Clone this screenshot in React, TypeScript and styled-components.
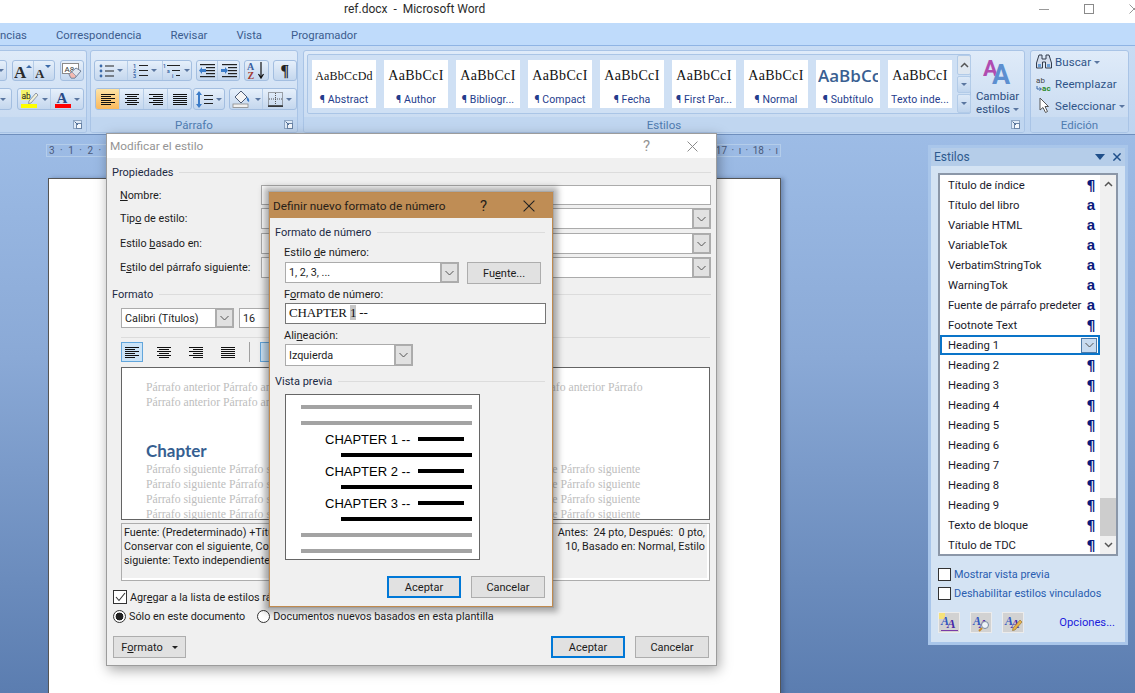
import React from 'react';
import styled, { createGlobalStyle } from 'styled-components';

const UI = `Roboto, "Open Sans", "Liberation Sans", sans-serif`;
const SERIF = `"Liberation Serif", "DejaVu Serif", serif`;

const GlobalStyle = createGlobalStyle`
  html, body { margin: 0; height: 100%; overflow: hidden; background: #fff; }
  body { font-family: ${UI}; font-size: 10.8px; color: #1c1c1c; }
  #root { height: 100%; }
  * { box-sizing: border-box; }
  u { text-underline-offset: 1px; }
`;

const Win = styled.div`
  position: relative;
  width: 1135px;
  height: 693px;
  overflow: hidden;
  display: flex;
  flex-direction: column;
`;

/* ---- title bar and tabs ---- */
const TitleBar = styled.div`
  height: 23px;
  flex: none;
  display: flex;
  align-items: center;
  padding: 0 0 5px 344px;
  background: #fff;
  font-size: 12px;
  color: #2b2b2b;
  white-space: pre;
`;
const WinControls = styled.div`
  margin-left: auto;
  margin-right: -4px;
  display: flex;
  align-items: center;
  gap: 35px;
`;
const MinBtn = styled.span`
  width: 10px;
  height: 1px;
  background: #9a9a9a;
`;
const MaxBtn = styled.span`
  width: 10px;
  height: 10px;
  border: 1px solid #8a8a8a;
`;
const TabBar = styled.div`
  height: 23px;
  flex: none;
  display: flex;
  align-items: center;
  gap: 29px;
  padding-top: 3px;
  background: #bfdbfb;
  border-bottom: 1px solid #8fb4e4;
  overflow: hidden;
`;
const Tab = styled.span<{ $cut?: boolean }>`
  font-size: 11.3px;
  color: #3b5b8e;
  ${(p) => p.$cut && 'margin-left: -6px;'}
`;

/* ---- ribbon ---- */
const Ribbon = styled.div`
  height: 89px;
  flex: none;
  display: flex;
  gap: 3px;
  padding: 4px 0 1px 0;
  background: linear-gradient(#c8dcf4, #bdd4f0);
  border-bottom: 1px solid #6f8fbd;
`;
const Group = styled.section<{ $w: number; $cut?: boolean; $ml?: number }>`
  width: ${(p) => p.$w}px;
  flex: none;
  margin-left: ${(p) => p.$ml ?? 0}px;
  display: flex;
  flex-direction: column;
  border: 1px solid #a9c4e6;
  border-radius: 3px;
  overflow: hidden;
  background: linear-gradient(#dfebf9, #c6d9f0);
  ${(p) => p.$cut && 'border-left: none; border-top-left-radius: 0; border-bottom-left-radius: 0;'}
`;
const GroupBody = styled.div`
  flex: 1;
  min-height: 0;
`;
const GroupLabel = styled.div`
  height: 15px;
  flex: none;
  position: relative;
  text-align: center;
  font-size: 11.5px;
  line-height: 17px;
  color: #4f7cb0;
  background: #c0d6f0;
`;
const Launcher = styled.svg`
  position: absolute;
  right: 4px;
  top: 3px;
`;
const ToolRows = styled.div`
  display: flex;
  flex-direction: column;
  gap: 7px;
  padding-top: 9px;
`;
const ToolRow = styled.div<{ $pl?: number; $gap?: number; $h?: number }>`
  display: flex;
  gap: ${(p) => p.$gap ?? 4}px;
  padding-left: ${(p) => p.$pl ?? 0}px;
  height: ${(p) => p.$h ?? 21}px;
  align-items: stretch;
`;
const ToolSet = styled.div<{ $ml?: number }>`
  display: flex;
  margin-left: ${(p) => p.$ml ?? 0}px;
  border: 1px solid #a3bee0;
  border-radius: 3px;
  background: linear-gradient(#e6f0fb 0%, #d5e3f4 50%, #c4d7ee 100%);
  overflow: hidden;
`;
const ToolBtn = styled.div<{ $w: number; $on?: boolean }>`
  width: ${(p) => p.$w}px;
  display: flex;
  align-items: center;
  justify-content: center;
  gap: 3px;
  border-right: 1px solid #b6cde8;
  &:last-child { border-right: none; }
  ${(p) => p.$on && 'background: linear-gradient(#fde3a5, #fbb95c);'}
`;
const Caret = styled.i<{ $dark?: boolean }>`
  width: 0;
  height: 0;
  border-left: 3px solid transparent;
  border-right: 3px solid transparent;
  border-top: 3px solid ${(p) => (p.$dark ? '#222' : '#5a76a0')};
`;
const Pilcrow = styled.strong`
  font-family: ${SERIF};
  font-size: 16px;
  color: #222;
`;

const GalleryWrap = styled.div`
  display: flex;
  height: 100%;
  padding: 3px 0 0 3px;
`;
const Gallery = styled.div`
  width: 664px;
  height: 60px;
  display: flex;
  border: 1px solid #aac5e6;
  border-radius: 2px;
  background: #cfe0f4;
`;
const Tiles = styled.div`
  flex: 1;
  display: flex;
  gap: 8px;
  padding: 5px 0 0 4px;
`;
const Tile = styled.div`
  width: 64px;
  height: 48px;
  flex: none;
  background: #fff;
  display: flex;
  flex-direction: column;
  align-items: center;
  overflow: hidden;
`;
const TileSample = styled.div<{ $kind?: string }>`
  height: 33px;
  width: 60px;
  overflow: hidden;
  white-space: nowrap;
  text-align: center;
  line-height: 32px;
  color: #111;
  font-family: ${SERIF};
  font-size: 14px;
  letter-spacing: 0.35px;
  ${(p) => p.$kind === 'small' && 'font-size: 12px; letter-spacing: 0.2px;'}
  ${(p) =>
    p.$kind === 'head' &&
    `font-family: "Open Sans", sans-serif; font-size: 17px; font-weight: 600; color: #3a5f92; text-align: left; letter-spacing: 0;`}
`;
const TileName = styled.div`
  font-size: 10.5px;
  line-height: 14px;
  letter-spacing: 0.1px;
  color: #243c8c;
  white-space: nowrap;
`;
const GalleryScroll = styled.div`
  width: 14px;
  display: flex;
  flex-direction: column;
  gap: 1px;
  margin-right: -1px;
`;
const ScrollCell = styled.div<{ $h: number; $dim?: boolean }>`
  height: ${(p) => p.$h}px;
  display: flex;
  align-items: center;
  justify-content: center;
  border: 1px solid #b2cbe8;
  border-radius: 2px;
  background: ${(p) => (p.$dim ? '#dfe7f0' : 'linear-gradient(#dde9f7, #c0d5ee)')};
`;
const ChangeStyles = styled.div`
  width: 51px;
  display: flex;
  flex-direction: column;
  align-items: center;
  margin-left: 1px;
  padding-top: 2px;
  font-size: 11.5px;
  line-height: 13px;
  color: #2b4d80;
  text-align: center;
`;
const ChangeCaption = styled.div`
  margin-top: 5px;
`;
const InlineCaret = styled(Caret)`
  display: inline-block;
  margin-left: 3px;
  vertical-align: 2px;
`;
const EditList = styled.div`
  display: flex;
  flex-direction: column;
  padding: 0 0 0 5px;
  gap: 1px;
`;
const EditItem = styled.div`
  height: 21px;
  display: flex;
  align-items: center;
  gap: 3px;
  font-size: 11.5px;
  letter-spacing: 0.1px;
  color: #2f5488;
`;

/* ---- document area ---- */
const Workspace = styled.div`
  flex: 1;
  min-height: 0;
  background: linear-gradient(#9dbce6 0%, #8aa9d6 40%, #5b7db0 100%);
  padding: 9px 0 0 46px;
`;
const Ruler = styled.div`
  width: 735px;
  height: 13px;
  display: flex;
  justify-content: space-between;
  align-items: center;
  padding: 0 2px;
  border: 1px solid #b4cdea;
  font-size: 10px;
  color: #4b5a7a;
  white-space: nowrap;
`;
const RulerMarks = styled.span<{ $spread: number }>`
  word-spacing: ${(p) => p.$spread}px;
`;
const Page = styled.div`
  width: 733px;
  height: 540px;
  margin: 21px 0 0 2px;
  background: #fff;
  border: 1px solid #555;
  box-shadow: 3px 0 4px rgba(40, 60, 100, 0.35);
`;

/* ---- dialogs ---- */
const BackDialog = styled.div`
  position: absolute;
  left: 106px;
  top: 133px;
  width: 611px;
  height: 533px;
  background: #f0f0f0;
  border: 1px solid #9c9c9c;
  box-shadow: 2px 4px 12px rgba(0, 0, 0, 0.35);
  display: flex;
  flex-direction: column;
`;
const FrontDialog = styled.div`
  position: absolute;
  left: 269px;
  top: 192px;
  width: 284px;
  height: 415px;
  background: #f0f0f0;
  border: 1px solid #c08a4e;
  box-shadow: 0 0 0 1px rgba(120, 120, 120, 0.25), 0 0 6px 5px rgba(0, 0, 0, 0.3);
  display: flex;
  flex-direction: column;
`;
const DlgTitle = styled.div<{ $active?: boolean }>`
  height: ${(p) => (p.$active ? 25 : 24)}px;
  flex: none;
  display: flex;
  align-items: center;
  padding-left: 3px;
  font-size: 11.8px;
  background: ${(p) => (p.$active ? '#bf8d55' : '#fff')};
  color: ${(p) => (p.$active ? '#262018' : '#949494')};
`;
const DlgHelp = styled.span<{ $right: number }>`
  margin-left: auto;
  margin-right: ${(p) => p.$right}px;
  font-size: 15px;
`;
const DlgClose = styled.span<{ $right: number }>`
  display: flex;
  margin-right: ${(p) => p.$right}px;
`;
const BackBody = styled.div`
  flex: 1;
  min-height: 0;
  padding: 7px 5px 0 5px;
  display: flex;
  flex-direction: column;
`;
const FrontBody = styled.div`
  flex: 1;
  min-height: 0;
  padding: 7px 7px 0 5px;
  display: flex;
  flex-direction: column;
`;
const Section = styled.div<{ $mt?: number }>`
  height: 14px;
  flex: none;
  margin-top: ${(p) => p.$mt ?? 0}px;
  padding-top: 2px;
  display: flex;
  align-items: center;
  gap: 6px;
  line-height: 12px;
  font-size: 11px;
  color: #1c2a44;
  &::after {
    content: '';
    flex: 1;
    height: 1px;
    margin-top: -2px;
    background: #dcdcdc;
  }
`;
const FieldRow = styled.div<{ $mt: number; $h: number }>`
  height: ${(p) => p.$h}px;
  margin-top: ${(p) => p.$mt}px;
  padding-left: 8px;
  display: flex;
  align-items: center;
  flex: none;
`;
const FieldLabel = styled.span`
  width: 141px;
  flex: none;
  white-space: nowrap;
`;
const Field = styled.div<{ $w?: number; $h?: number; $serif?: boolean }>`
  ${(p) => (p.$w ? `width: ${p.$w}px; flex: none;` : 'flex: 1;')}
  height: ${(p) => (p.$h ? `${p.$h}px` : '100%')};
  display: flex;
  align-items: center;
  padding-left: 3px;
  background: #fff;
  border: 1px solid #ababab;
  white-space: pre;
  ${(p) =>
    p.$serif &&
    `font-family: ${SERIF}; font-size: 13px; letter-spacing: -.2px; color: #111; border-color: #767676; padding-bottom: 2px;`}
`;
const Arrow = styled.span`
  margin-left: auto;
  width: 18px;
  height: 100%;
  flex: none;
  display: flex;
  align-items: center;
  justify-content: center;
  background: #e1e1e1;
  border-left: 2px solid #adadad;
  border-right: 1px solid #adadad;
  border-top: 1px solid #adadad;
  border-bottom: 1px solid #adadad;
`;
const Chevron = () => (
  <svg width="9" height="6" viewBox="0 0 9 6">
    <path d="M0.5 1 L4.5 5 L8.5 1" fill="none" stroke="#555" strokeWidth="1" />
  </svg>
);
const SmallLabel = styled.div<{ $mt?: number }>`
  height: 14px;
  line-height: 16px;
  flex: none;
  margin-top: ${(p) => p.$mt ?? 0}px;
  padding-left: 9px;
  font-size: 11px;
`;
const Picked = styled.span`
  background: #c6c6c6;
`;
const FrontFieldRow = styled.div<{ $mt: number; $h: number }>`
  height: ${(p) => p.$h}px;
  margin-top: ${(p) => p.$mt}px;
  flex: none;
  padding-left: 10px;
  display: flex;
  align-items: flex-start;
  gap: 8px;
`;
const Btn = styled.div<{ $w: number; $default?: boolean }>`
  width: ${(p) => p.$w}px;
  height: 22px;
  flex: none;
  display: flex;
  align-items: center;
  justify-content: center;
  gap: 9px;
  font-size: 11px;
  background: #e1e1e1;
  border: ${(p) => (p.$default ? '2px solid #0078d7' : '1px solid #adadad')};
`;
const FormatRow = styled.div`
  height: 20px;
  margin-top: 7px;
  padding-left: 9px;
  display: flex;
  gap: 5px;
  flex: none;
`;
const Divider = styled.div`
  height: 1px;
  margin: 9px 1px 0 9px;
  background: #dcdcdc;
  flex: none;
`;
const AlignRow = styled.div`
  height: 20px;
  margin-top: 4px;
  padding-left: 9px;
  display: flex;
  gap: 10px;
  flex: none;
`;
const AlignBtn = styled.div<{ $on?: boolean }>`
  width: 22px;
  height: 20px;
  display: flex;
  align-items: center;
  justify-content: center;
  ${(p) => p.$on && 'background: #cce4f7; border: 1px solid #62a6dc;'}
`;
const AlignSep = styled.div`
  width: 1px;
  background: #a0a0a0;
`;
const PreviewPane = styled.div`
  height: 153px;
  margin: 5px 1px 0 9px;
  flex: none;
  overflow: hidden;
  background: #fff;
  border: 1px solid #646464;
  padding: 12px 0 0 24px;
  font-family: ${SERIF};
  font-size: 11.75px;
  line-height: 15px;
  color: #bdbdbd;
  white-space: nowrap;
`;
const PreviewHeading = styled.div`
  font-family: Lato, "Open Sans", sans-serif;
  font-size: 17px;
  font-weight: 700;
  line-height: 22px;
  color: #365f91;
  margin: 30px 0 0;
`;
const Desc = styled.div`
  height: 58px;
  margin: 3px 1px 0 9px;
  flex: none;
  background: #f0f0f0;
  border: 1px solid #adadad;
  box-shadow: inset 0 -2px 0 #fff, inset -2px 0 0 #fff;
  padding: 2px 4px 0 2px;
  line-height: 14px;
  overflow: hidden;
`;
const DescLine = styled.div`
  display: flex;
  justify-content: space-between;
  white-space: pre;
`;
const CheckRow = styled.div<{ $mt: number }>`
  height: 14px;
  margin-top: ${(p) => p.$mt}px;
  padding-left: 1px;
  display: flex;
  align-items: center;
  gap: 3px;
  flex: none;
  white-space: nowrap;
`;
const CheckBox = styled.span<{ $size?: number }>`
  width: ${(p) => p.$size ?? 14}px;
  height: ${(p) => p.$size ?? 14}px;
  flex: none;
  display: flex;
  align-items: center;
  justify-content: center;
  background: #fff;
  border: 1px solid #333;
`;
const Radio = styled.span<{ $on?: boolean; $ml?: number }>`
  width: 13px;
  height: 13px;
  flex: none;
  margin-left: ${(p) => p.$ml ?? 0}px;
  border-radius: 50%;
  border: 1px solid #333;
  background: ${(p) => (p.$on ? 'radial-gradient(circle, #222 0 3.6px, #fff 4.2px)' : '#fff')};
`;
const BottomBar = styled.div`
  margin-top: 13px;
  padding: 0 2px 0 1px;
  display: flex;
  gap: 10px;
  flex: none;
`;
const BottomSpacer = styled.div`
  flex: 1;
`;
const Sample = styled.div`
  width: 195px;
  height: 166px;
  margin: 6px 0 0 10px;
  flex: none;
  background: #fff;
  border: 1px solid #666;
  padding: 4px 7px 0 15px;
`;
const SampleRow = styled.div<{ $indent?: number }>`
  height: 16px;
  display: flex;
  align-items: center;
  padding-left: ${(p) => p.$indent ?? 0}px;
`;
const SampleBar = styled.div<{ $black?: boolean; $w?: number }>`
  height: 4px;
  ${(p) => (p.$w ? `width: ${p.$w}px; margin-left: 8px;` : 'flex: 1;')}
  background: ${(p) => (p.$black ? '#000' : '#a3a3a3')};
`;
const SampleText = styled.span`
  font-family: "Liberation Sans", Arial, sans-serif;
  font-size: 13px;
  color: #000;
  white-space: nowrap;
`;
const FrontFooter = styled.div`
  margin-top: 16px;
  display: flex;
  justify-content: flex-end;
  gap: 10px;
  flex: none;
`;

/* ---- styles task pane ---- */
const Pane = styled.aside`
  position: absolute;
  left: 928px;
  top: 145px;
  width: 200px;
  height: 500px;
  border: 3px solid #a9c6ea;
  background: #d4e3f3;
  display: flex;
  flex-direction: column;
`;
const PaneHead = styled.div`
  height: 18px;
  flex: none;
  display: flex;
  align-items: center;
  padding: 0 4px 0 3px;
  background: #b5cde9;
  color: #2e5a8e;
  font-size: 12px;
`;
const PaneHeadIcons = styled.span`
  margin-left: auto;
  display: flex;
  align-items: center;
  gap: 8px;
`;
const List = styled.div`
  width: 180px;
  height: 383px;
  margin: 7px 0 0 7px;
  flex: none;
  display: flex;
  border: 2px solid #8b97a8;
  background: #fff;
`;
const Rows = styled.div`
  flex: 1;
  min-width: 0;
`;
const StyleRow = styled.div<{ $on?: boolean }>`
  height: 20px;
  display: flex;
  align-items: center;
  padding: 0 3px 0 8px;
  font-size: 11.3px;
  color: #1a1a2a;
  white-space: nowrap;
  ${(p) => p.$on && 'border: 2px solid #0a74c8; padding: 0 1px 0 6px;'}
`;
const Mark = styled.span<{ $para?: boolean }>`
  margin-left: auto;
  width: 12px;
  text-align: center;
  font-family: ${(p) => (p.$para ? '"DejaVu Sans"' : '"Liberation Sans"')}, sans-serif;
  font-weight: 700;
  font-size: ${(p) => (p.$para ? 14 : 15)}px;
  line-height: 16px;
  color: #0a1a7c;
`;
const RowDrop = styled.span`
  margin-left: auto;
  width: 16px;
  height: 15px;
  display: flex;
  align-items: center;
  justify-content: center;
  background: #c8dbf0;
  border: 1px solid #4f7ba8;
`;
const Scroll = styled.div`
  width: 16px;
  flex: none;
  display: flex;
  flex-direction: column;
  background: #f0f0f0;
`;
const ScrollArrow = styled.div`
  height: 18px;
  flex: none;
  display: flex;
  align-items: center;
  justify-content: center;
`;
const ScrollTrack = styled.div`
  flex: 1;
  display: flex;
  flex-direction: column;
  justify-content: flex-end;
`;
const ScrollThumb = styled.div`
  height: 38px;
  background: #cdcdcd;
`;
const PaneCheck = styled.div<{ $mt: number }>`
  height: 13px;
  margin: ${(p) => p.$mt}px 0 0 7px;
  display: flex;
  align-items: center;
  gap: 3px;
  font-size: 10.9px;
  color: #2a5db0;
  white-space: nowrap;
`;
const PaneFoot = styled.div`
  margin: 12px 0 0 7px;
  display: flex;
  align-items: center;
  gap: 10px;
`;
const PaneBtn = styled.div`
  width: 22px;
  height: 21px;
  display: flex;
  align-items: center;
  justify-content: center;
  background: #d2d2d2;
  border: 1px solid #ececec;
`;
const OptionsLink = styled.span`
  margin-left: auto;
  margin-right: 10px;
  font-size: 11.2px;
  color: #1c1cdc;
`;

/* ---- drawn icons ---- */
const ALIGN: Record<string, number[][]> = {
  left: [[1, 14], [1, 10], [1, 14], [1, 10], [1, 14], [1, 10]],
  center: [[1, 14], [3, 10], [1, 14], [3, 10], [1, 14], [3, 10]],
  right: [[1, 14], [5, 10], [1, 14], [5, 10], [1, 14], [5, 10]],
  justify: [[1, 14], [1, 14], [1, 14], [1, 14], [1, 14], [1, 14]],
};
const AlignIcon = ({ kind }: { kind: string }) => (
  <svg width="16" height="13" viewBox="0 0 16 13">
    {ALIGN[kind].map(([x, w], i) => (
      <rect key={i} x={x} y={i * 2 + 1} width={w} height="1" fill="#111" />
    ))}
  </svg>
);
const Launch = () => (
  <Launcher width="9" height="9" viewBox="0 0 9 9">
    <rect x="0.5" y="0.5" width="8" height="8" fill="#dfeaf6" stroke="#8ea6c4" />
    <rect x="3.5" y="3.5" width="5" height="5" fill="#f4f8fc" stroke="#6a84a6" />
    <path d="M1.5 1.5 L5 5" stroke="#4d6a92" />
  </Launcher>
);
const Grow = ({ up }: { up?: boolean }) => (
  <svg width="18" height="16" viewBox="0 0 18 16">
    <text x="0" y="15" fontFamily={SERIF} fontWeight="700" fontSize={up ? 17 : 13} fill="#2b2b2b">
      A
    </text>
    <path d={up ? 'M12 5 L15 2 L18 5 Z' : 'M10 2 L16 2 L13 5 Z'} fill="#3c6aa8" />
  </svg>
);
const ClearFormat = () => (
  <svg width="22" height="18" viewBox="0 0 22 18">
    <rect x="1.5" y="1.5" width="16" height="10" fill="#fff" stroke="#8a8a8a" />
    <text x="3.5" y="9.5" fontFamily={UI} fontSize="8" fill="#333">
      A8
    </text>
    <path d="M8 12 L15 6 L20 9 L14 16 L10 16 Z" fill="#dfe5ee" stroke="#6f7f98" />
    <path d="M8 12 L11 10 L15 14 L14 16 L10 16 Z" fill="#f4b9b0" stroke="#6f7f98" strokeWidth=".6" />
  </svg>
);
const Highlight = () => (
  <svg width="18" height="18" viewBox="0 0 18 18">
    <rect x="0" y="0" width="9" height="10" fill="#f5f56a" />
    <text x="0.5" y="8.5" fontFamily={UI} fontSize="8.5" fill="#222">
      ab
    </text>
    <path d="M8 11 L15 3 L17 5 L10 13 L7.5 13.5 Z" fill="#f2f2d8" stroke="#7a8296" strokeWidth=".8" />
    <rect x="0" y="14" width="16" height="4" fill="#ffff00" />
  </svg>
);
const FontColor = () => (
  <svg width="16" height="18" viewBox="0 0 16 18">
    <text x="1.5" y="12.5" fontFamily={SERIF} fontWeight="700" fontSize="15" fill="#2a4a86">
      A
    </text>
    <rect x="0" y="14" width="16" height="4" fill="#f00" />
  </svg>
);
const Bullets = () => (
  <svg width="15" height="14" viewBox="0 0 15 14">
    {[2, 7, 12].map((y) => (
      <g key={y}>
        <circle cx="2" cy={y} r="1.4" fill="#3c6aa8" />
        <rect x="6" y={y - 0.5} width="9" height="1" fill="#222" />
      </g>
    ))}
  </svg>
);
const Numbers = () => (
  <svg width="15" height="15" viewBox="0 0 15 15">
    {[0, 1, 2].map((i) => (
      <g key={i}>
        <text x="0" y={i * 5 + 5} fontFamily={UI} fontWeight="700" fontSize="5.5" fill="#3c6aa8">
          {i + 1}
        </text>
        <rect x="6" y={i * 5 + 2} width="9" height="1" fill="#222" />
      </g>
    ))}
  </svg>
);
const Multi = () => (
  <svg width="18" height="16" viewBox="0 0 18 16">
    <text x="0" y="5" fontFamily={UI} fontWeight="700" fontSize="5" fill="#3c6aa8">1</text>
    <rect x="4" y="2" width="13" height="1" fill="#222" />
    <text x="4" y="10" fontFamily={UI} fontWeight="700" fontSize="5" fill="#3c6aa8">a</text>
    <rect x="9" y="7" width="8" height="1" fill="#222" />
    <text x="9" y="15" fontFamily={UI} fontWeight="700" fontSize="5" fill="#3c6aa8">i</text>
    <rect x="13" y="12" width="4" height="1" fill="#222" />
  </svg>
);
const Indent = ({ more }: { more?: boolean }) => (
  <svg width="18" height="15" viewBox="0 0 18 15">
    {[1, 4, 7, 10, 13].map((y, i) => (
      <rect key={y} x={i > 0 && i < 4 ? 8 : 2} y={y} width={i > 0 && i < 4 ? 9 : 15} height="1.2" fill="#222" />
    ))}
    <path
      d={more ? 'M1 6 H5 V4 L8 7.5 L5 11 V9 H1 Z' : 'M8 6 H4 V4 L1 7.5 L4 11 V9 H8 Z'}
      fill="#3c7cc8"
    />
  </svg>
);
const Sort = () => (
  <svg width="20" height="19" viewBox="0 0 20 19">
    <text x="1" y="9" fontFamily={SERIF} fontWeight="700" fontSize="10" fill="#3a5fa0">A</text>
    <text x="1.5" y="18" fontFamily={SERIF} fontWeight="700" fontSize="10" fill="#a33a30">Z</text>
    <path d="M15 1 V16 M12.5 13 L15 17 L17.5 13" fill="none" stroke="#111" strokeWidth="1.2" />
  </svg>
);
const Spacing = () => (
  <svg width="17" height="17" viewBox="0 0 17 17">
    <path d="M3 0 L6 4 H4 V13 H6 L3 17 L0 13 H2 V4 H0 Z" fill="#3c7cc8" />
    <rect x="8" y="4" width="9" height="1" fill="#222" />
    <rect x="8" y="8" width="9" height="1" fill="#222" />
    <rect x="8" y="12" width="9" height="1" fill="#222" />
  </svg>
);
const Bucket = () => (
  <svg width="20" height="18" viewBox="0 0 20 18">
    <path d="M3 7 L9 1 L15 7 L9 13 Z" fill="#f4f4f4" stroke="#4c5a74" />
    <path d="M15 7 Q18 9 17 12 Q14 11 15 7 Z" fill="#3c7cc8" />
    <rect x="1" y="14" width="15" height="3.5" fill="#f0f0f0" stroke="#8a8a8a" strokeWidth=".8" />
  </svg>
);
const Borders = () => (
  <svg width="15" height="15" viewBox="0 0 15 15">
    <rect x="0.5" y="0.5" width="14" height="13" fill="none" stroke="#555" strokeDasharray="1 1" />
    <path d="M7.5 1 V13 M1 7 H14" stroke="#555" strokeDasharray="1 1" />
    <rect x="0" y="13.5" width="15" height="1.3" fill="#111" />
  </svg>
);
const ChangeIcon = () => (
  <svg width="30" height="29" viewBox="0 0 30 29">
    <text x="0" y="20" fontFamily={UI} fontWeight="700" fontSize="22" fill="#b04cb0">A</text>
    <text x="9" y="28" fontFamily={UI} fontWeight="700" fontSize="27" fill="#5d8fd0">A</text>
  </svg>
);
const Binoculars = () => (
  <svg width="16" height="15" viewBox="0 0 16 15">
    <path d="M3 1 H6 V5 H10 V1 H13 L15.5 9 V14 H9.5 V8 H6.5 V14 H0.5 V9 Z" fill="#d3dded" stroke="#333c4c" />
    <rect x="2" y="10" width="3" height="3" fill="#6a9fd8" />
    <rect x="11" y="10" width="3" height="3" fill="#6a9fd8" />
  </svg>
);
const Replace = () => (
  <svg width="16" height="16" viewBox="0 0 16 16">
    <text x="0" y="7" fontFamily={UI} fontSize="8" fill="#444">ab</text>
    <text x="6" y="15" fontFamily={UI} fontWeight="700" fontSize="8" fill="#2a8a2a">ac</text>
    <path d="M1 10 V13 H5 M3.5 11.5 L5.5 13 L3.5 14.5" fill="none" stroke="#3c6aa8" />
  </svg>
);
const Pointer = () => (
  <svg width="16" height="17" viewBox="0 0 16 17">
    <path d="M4 1 V13 L7 10.5 L9.5 15.5 L11.5 14.5 L9 9.5 H12.5 Z" fill="#fff" stroke="#555" />
  </svg>
);
const TriUp = () => (
  <svg width="9" height="6" viewBox="0 0 9 6"><path d="M1 5 L4.5 1.5 L8 5" fill="none" stroke="#555" strokeWidth="1.5" /></svg>
);
const TriDown = () => (
  <svg width="9" height="6" viewBox="0 0 9 6"><path d="M1 1 L4.5 4.5 L8 1" fill="none" stroke="#555" strokeWidth="1.5" /></svg>
);
const Close = ({ color, size, weight = 0.9 }: { color: string; size: number; weight?: number }) => (
  <svg width={size} height={size} viewBox="0 0 10 10">
    <path d="M0.5 0.5 L9.5 9.5 M9.5 0.5 L0.5 9.5" stroke={color} strokeWidth={weight} />
  </svg>
);
const Tick = () => (
  <svg width="11" height="10" viewBox="0 0 11 10">
    <path d="M1 5 L4 8.5 L10 1" fill="none" stroke="#333" strokeWidth="1.1" />
  </svg>
);
const PaneIcon = ({ kind }: { kind: 'new' | 'find' | 'edit' }) => (
  <svg width="20" height="19" viewBox="0 0 20 19">
    {kind === 'new' && <rect x="0" y="0" width="6" height="6" fill="#f5e27a" />}
    <text x="2" y="12" fontFamily={SERIF} fontStyle="italic" fontWeight="700" fontSize="12" fill="#2f56c0">A</text>
    <text x="8" y="15" fontFamily={SERIF} fontStyle="italic" fontWeight="700" fontSize="13" fill="#4a2aa8">A</text>
    {kind === 'new' && <rect x="2" y="17" width="17" height="1" fill="#7a3aa8" />}
    {kind === 'find' && <circle cx="14" cy="12" r="3.5" fill="#eef3f8" stroke="#7a8aa0" />}
    {kind === 'find' && <path d="M11 15 L8 18" stroke="#c88a2a" strokeWidth="2" />}
    {kind === 'edit' && <path d="M10 15 L17 7 L19 9 L12 17 L9.5 17.5 Z" fill="#e8b24a" stroke="#8a6a2a" strokeWidth=".6" />}
  </svg>
);

const SAMPLES = [
  ['AaBbCcDd', '¶ Abstract', 'small'],
  ['AaBbCcI', '¶ Author', ''],
  ['AaBbCcI', '¶ Bibliogr...', ''],
  ['AaBbCcI', '¶ Compact', ''],
  ['AaBbCcI', '¶ Fecha', ''],
  ['AaBbCcI', '¶ First Par...', ''],
  ['AaBbCcI', '¶ Normal', ''],
  ['AaBbCcI', '¶ Subtítulo', 'head'],
  ['AaBbCcI', 'Texto inde...', ''],
];

const STYLE_ROWS: [string, string][] = [
  ['Título de índice', '¶'],
  ['Título del libro', 'a'],
  ['Variable HTML', 'a'],
  ['VariableTok', 'a'],
  ['VerbatimStringTok', 'a'],
  ['WarningTok', 'a'],
  ['Fuente de párrafo predeter', 'a'],
  ['Footnote Text', '¶'],
  ['Heading 1', ''],
  ['Heading 2', '¶'],
  ['Heading 3', '¶'],
  ['Heading 4', '¶'],
  ['Heading 5', '¶'],
  ['Heading 6', '¶'],
  ['Heading 7', '¶'],
  ['Heading 8', '¶'],
  ['Heading 9', '¶'],
  ['Texto de bloque', '¶'],
  ['Título de TDC', '¶'],
];

const before = 'Párrafo anterior '.repeat(6) + 'Párrafo';
const after = 'Párrafo siguiente '.repeat(5) + 'Párrafo siguiente';

function Ribbons() {
  return (
    <Ribbon>
      <Group $w={87} $cut>
        <GroupBody>
          <ToolRows>
            <ToolRow $gap={5}>
              <ToolSet $ml={-6}>
                <ToolBtn $w={11}><Caret /></ToolBtn>
              </ToolSet>
              <ToolSet>
                <ToolBtn $w={21}><Grow up /></ToolBtn>
                <ToolBtn $w={20}><Grow /></ToolBtn>
              </ToolSet>
              <ToolSet>
                <ToolBtn $w={22}><ClearFormat /></ToolBtn>
              </ToolSet>
            </ToolRow>
            <ToolRow $gap={5} $h={22}>
              <ToolSet $ml={-6}>
                <ToolBtn $w={16}><Caret /></ToolBtn>
              </ToolSet>
              <ToolSet>
                <ToolBtn $w={33}><Highlight /><Caret /></ToolBtn>
                <ToolBtn $w={32}><FontColor /><Caret /></ToolBtn>
              </ToolSet>
            </ToolRow>
          </ToolRows>
        </GroupBody>
        <GroupLabel><Launch /></GroupLabel>
      </Group>
      <Group $w={208}>
        <GroupBody>
          <ToolRows>
            <ToolRow $pl={3}>
              <ToolSet>
                <ToolBtn $w={34}><Bullets /><Caret /></ToolBtn>
                <ToolBtn $w={35}><Numbers /><Caret /></ToolBtn>
                <ToolBtn $w={29}><Multi /><Caret /></ToolBtn>
              </ToolSet>
              <ToolSet>
                <ToolBtn $w={22}><Indent /></ToolBtn>
                <ToolBtn $w={21}><Indent more /></ToolBtn>
              </ToolSet>
              <ToolSet><ToolBtn $w={23}><Sort /></ToolBtn></ToolSet>
              <ToolSet><ToolBtn $w={23}><Pilcrow>¶</Pilcrow></ToolBtn></ToolSet>
            </ToolRow>
            <ToolRow $pl={4} $gap={1} $h={22}>
              <ToolSet>
                <ToolBtn $w={24} $on><AlignIcon kind="left" /></ToolBtn>
                <ToolBtn $w={24}><AlignIcon kind="center" /></ToolBtn>
                <ToolBtn $w={24}><AlignIcon kind="right" /></ToolBtn>
                <ToolBtn $w={23}><AlignIcon kind="justify" /></ToolBtn>
              </ToolSet>
              <ToolSet>
                <ToolBtn $w={30}><Spacing /><Caret /></ToolBtn>
              </ToolSet>
              <ToolSet $ml={3}>
                <ToolBtn $w={33}><Bucket /><Caret /></ToolBtn>
                <ToolBtn $w={33}><Borders /><Caret /></ToolBtn>
              </ToolSet>
            </ToolRow>
          </ToolRows>
        </GroupBody>
        <GroupLabel>Párrafo<Launch /></GroupLabel>
      </Group>
      <Group $w={722} $ml={2}>
        <GroupBody>
          <GalleryWrap>
            <Gallery>
              <Tiles>
                {SAMPLES.map(([sample, name, kind]) => (
                  <Tile key={name}>
                    <TileSample $kind={kind}>{sample}</TileSample>
                    <TileName>{name}</TileName>
                  </Tile>
                ))}
              </Tiles>
              <GalleryScroll>
                <ScrollCell $h={20} $dim><TriUp /></ScrollCell>
                <ScrollCell $h={18}><Caret /></ScrollCell>
                <ScrollCell $h={19}><Caret /></ScrollCell>
              </GalleryScroll>
            </Gallery>
            <ChangeStyles>
              <ChangeIcon />
              <ChangeCaption>Cambiar<br />estilos<InlineCaret /></ChangeCaption>
            </ChangeStyles>
          </GalleryWrap>
        </GroupBody>
        <GroupLabel>Estilos<Launch /></GroupLabel>
      </Group>
      <Group $w={99} $ml={2}>
        <GroupBody>
          <EditList>
            <EditItem><Binoculars /><span>Buscar<InlineCaret /></span></EditItem>
            <EditItem><Replace />Reemplazar</EditItem>
            <EditItem><Pointer /><span>Seleccionar<InlineCaret /></span></EditItem>
          </EditList>
        </GroupBody>
        <GroupLabel>Edición</GroupLabel>
      </Group>
    </Ribbon>
  );
}

function StyleDialog() {
  return (
    <BackDialog>
      <DlgTitle>
        Modificar el estilo
        <DlgHelp $right={37}>?</DlgHelp>
        <DlgClose $right={18}><Close color="#8a8a8a" size={11} /></DlgClose>
      </DlgTitle>
      <BackBody>
        <Section>Propiedades</Section>
        <FieldRow $mt={6} $h={20}>
          <FieldLabel><u>N</u>ombre:</FieldLabel>
          <Field />
        </FieldRow>
        <FieldRow $mt={3} $h={21}>
          <FieldLabel>Tip<u>o</u> de estilo:</FieldLabel>
          <Field><Arrow><Chevron /></Arrow></Field>
        </FieldRow>
        <FieldRow $mt={4} $h={21}>
          <FieldLabel>Estilo <u>b</u>asado en:</FieldLabel>
          <Field><Arrow><Chevron /></Arrow></Field>
        </FieldRow>
        <FieldRow $mt={3} $h={21}>
          <FieldLabel>E<u>s</u>tilo del párrafo siguiente:</FieldLabel>
          <Field><Arrow><Chevron /></Arrow></Field>
        </FieldRow>
        <Section $mt={9}>Formato</Section>
        <FormatRow>
          <Field $w={113}>Calibri (Títulos)<Arrow><Chevron /></Arrow></Field>
          <Field $w={50}>16</Field>
        </FormatRow>
        <Divider />
        <AlignRow>
          <AlignBtn $on><AlignIcon kind="left" /></AlignBtn>
          <AlignBtn><AlignIcon kind="center" /></AlignBtn>
          <AlignBtn><AlignIcon kind="right" /></AlignBtn>
          <AlignBtn><AlignIcon kind="justify" /></AlignBtn>
          <AlignSep />
          <AlignBtn $on />
        </AlignRow>
        <PreviewPane>
          <div>{before}</div>
          <div>Párrafo anterior Párrafo anterior</div>
          <PreviewHeading>Chapter</PreviewHeading>
          <div>{after}</div>
          <div>{after}</div>
          <div>{after}</div>
          <div>{after}</div>
        </PreviewPane>
        <Desc>
          <DescLine><span>Fuente: (Predeterminado) +Títulos</span><span>Antes:  24 pto, Después:  0 pto,</span></DescLine>
          <DescLine><span>Conservar con el siguiente, Conservar</span><span>10, Basado en: Normal, Estilo</span></DescLine>
          <DescLine><span>siguiente: Texto independiente</span></DescLine>
        </Desc>
        <CheckRow $mt={9}>
          <CheckBox><Tick /></CheckBox>
          <span>Agr<u>e</u>gar a la lista de estilos rápidos</span>
        </CheckRow>
        <CheckRow $mt={5}>
          <Radio $on />
          Sólo en este documento
          <Radio $ml={9} />
          Documentos nuevos basados en esta plantilla
        </CheckRow>
        <BottomBar>
          <Btn $w={73}><span>F<u>o</u>rmato</span><Caret $dark /></Btn>
          <BottomSpacer />
          <Btn $w={74} $default>Aceptar</Btn>
          <Btn $w={74}>Cancelar</Btn>
        </BottomBar>
      </BackBody>
    </BackDialog>
  );
}

function NumberDialog() {
  return (
    <FrontDialog>
      <DlgTitle $active>
        Definir nuevo formato de número
        <DlgHelp $right={36}>?</DlgHelp>
        <DlgClose $right={17}><Close color="#222" size={12} /></DlgClose>
      </DlgTitle>
      <FrontBody>
        <Section>Formato de número</Section>
        <SmallLabel $mt={6}>Estilo <u>d</u>e número:</SmallLabel>
        <FrontFieldRow $mt={3} $h={22}>
          <Field $w={174} $h={21}>1, 2, 3, ...<Arrow><Chevron /></Arrow></Field>
          <Btn $w={74}><span>Fu<u>e</u>nte...</span></Btn>
        </FrontFieldRow>
        <SmallLabel $mt={3}>F<u>o</u>rmato de número:</SmallLabel>
        <FrontFieldRow $mt={2} $h={21}>
          <Field $w={261} $serif><span>CHAPTER <Picked>1</Picked> --</span></Field>
        </FrontFieldRow>
        <SmallLabel $mt={4}>Ali<u>n</u>eación:</SmallLabel>
        <FrontFieldRow $mt={2} $h={22}>
          <Field $w={128}>Izquierda<Arrow><Chevron /></Arrow></Field>
        </FrontFieldRow>
        <Section $mt={8}>Vista previa</Section>
        <Sample>
          <SampleRow><SampleBar /></SampleRow>
          <SampleRow><SampleBar /></SampleRow>
          <SampleRow $indent={24}><SampleText>CHAPTER 1 --</SampleText><SampleBar $black $w={46} /></SampleRow>
          <SampleRow $indent={40}><SampleBar $black /></SampleRow>
          <SampleRow $indent={24}><SampleText>CHAPTER 2 --</SampleText><SampleBar $black $w={46} /></SampleRow>
          <SampleRow $indent={40}><SampleBar $black /></SampleRow>
          <SampleRow $indent={24}><SampleText>CHAPTER 3 --</SampleText><SampleBar $black $w={46} /></SampleRow>
          <SampleRow $indent={40}><SampleBar $black /></SampleRow>
          <SampleRow><SampleBar /></SampleRow>
          <SampleRow><SampleBar /></SampleRow>
        </Sample>
        <FrontFooter>
          <Btn $w={74} $default>Aceptar</Btn>
          <Btn $w={74}>Cancelar</Btn>
        </FrontFooter>
      </FrontBody>
    </FrontDialog>
  );
}

function StylesPane() {
  return (
    <Pane>
      <PaneHead>
        Estilos
        <PaneHeadIcons>
          <svg width="10" height="6" viewBox="0 0 10 6"><path d="M0 0 H10 L5 6 Z" fill="#1f4f8a" /></svg>
          <Close color="#1f4f8a" size={8} weight={1.8} />
        </PaneHeadIcons>
      </PaneHead>
      <List>
        <Rows>
          {STYLE_ROWS.map(([name, mark]) =>
            mark ? (
              <StyleRow key={name}>{name}<Mark $para={mark === '¶'}>{mark}</Mark></StyleRow>
            ) : (
              <StyleRow key={name} $on>{name}<RowDrop><Chevron /></RowDrop></StyleRow>
            ),
          )}
        </Rows>
        <Scroll>
          <ScrollArrow><TriUp /></ScrollArrow>
          <ScrollTrack><ScrollThumb /></ScrollTrack>
          <ScrollArrow><TriDown /></ScrollArrow>
        </Scroll>
      </List>
      <PaneCheck $mt={12}><CheckBox $size={13} />Mostrar vista previa</PaneCheck>
      <PaneCheck $mt={6}><CheckBox $size={13} />Deshabilitar estilos vinculados</PaneCheck>
      <PaneFoot>
        <PaneBtn><PaneIcon kind="new" /></PaneBtn>
        <PaneBtn><PaneIcon kind="find" /></PaneBtn>
        <PaneBtn><PaneIcon kind="edit" /></PaneBtn>
        <OptionsLink>Opciones...</OptionsLink>
      </PaneFoot>
    </Pane>
  );
}

export default function App() {
  return (
    <>
      <GlobalStyle />
      <Win>
        <TitleBar>
          {'ref.docx  -  Microsoft Word'}
          <WinControls>
            <MinBtn />
            <MaxBtn />
            <Close color="#8a8a8a" size={10} />
          </WinControls>
        </TitleBar>
        <TabBar>
          <Tab $cut>encias</Tab>
          <Tab>Correspondencia</Tab>
          <Tab>Revisar</Tab>
          <Tab>Vista</Tab>
          <Tab>Programador</Tab>
        </TabBar>
        <Ribbons />
        <Workspace>
          <Ruler>
            <RulerMarks $spread={3}>3 · 1 · 2 ·</RulerMarks>
            <RulerMarks $spread={2}>· 17 · ı · 18 · ı</RulerMarks>
          </Ruler>
          <Page />
        </Workspace>
        <StyleDialog />
        <NumberDialog />
        <StylesPane />
      </Win>
    </>
  );
}
